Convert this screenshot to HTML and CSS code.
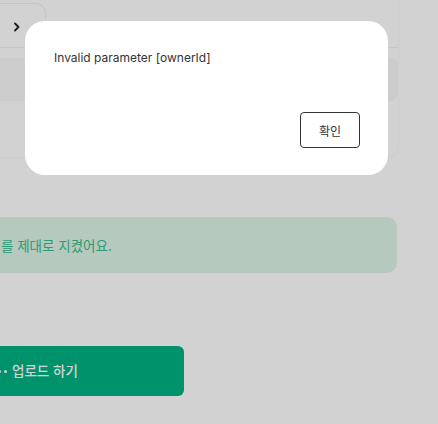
FILE: index.html
```html
<!DOCTYPE html>
<html lang="ko">
<head>
<meta charset="utf-8">
<link rel="stylesheet" href="styles.css">
</head>
<body>
<div class="page">
  <section class="panel">
    <div class="tabs">
      <div class="tab">
        <svg class="chev" width="8" height="10" viewBox="0 0 8 10"><path d="M2 1.5 L5.5 5 L2 8.5" fill="none" stroke="#222" stroke-width="1.8" stroke-linecap="round" stroke-linejoin="round"/></svg>
      </div>
    </div>
    <div class="bar"></div>
  </section>
  <div class="notice"><span class="notice-text">를 제대로 지켰어요.</span></div>
  <button class="upload"><span class="dot"></span><span class="dot"></span>업로드 하기</button>
</div>

<div class="overlay">
  <div class="modal">
    <p class="msg">Invalid parameter [ownerId]</p>
    <div class="actions"><button class="ok">확인</button></div>
  </div>
</div>
</body>
</html>
```

FILE: styles.css
```css
html, body {
  margin: 0;
  padding: 0;
  background: #ffffff;
  overflow: hidden;
  width: 438px;
  height: 424px;
  font-family: Inter, "Noto Sans CJK KR", sans-serif;
}
.page {
  margin-left: -200px;
  width: 599px;
  display: flex;
  flex-direction: column;
}
.panel {
  box-sizing: border-box;
  height: 168px;
  margin-top: -10px;
  border: 1px solid #f9f9f9;
  border-radius: 12px;
  display: flex;
  flex-direction: column;
}
.tabs {
  display: flex;
  justify-content: flex-start;
  padding-top: 12px;
  border-bottom: 1px solid #f2f2f2;
}
.tab {
  box-sizing: border-box;
  width: 245px;
  height: 44px;
  border: 1px solid #f0f0f0;
  border-left: none;
  border-bottom: none;
  border-radius: 0 10px 0 0;
  display: flex;
  align-items: center;
  padding-left: 212px;
}
.chev { display: block; margin-top: 2px; }
.bar {
  margin-top: 10px;
  width: 597px;
  height: 43px;
  background: #f8f8f8;
  border-radius: 0 8px 8px 0;
}
.notice {
  margin-top: 59px;
  width: 597px;
  height: 56px;
  box-sizing: border-box;
  background: #ddf4e8;
  border-radius: 10px;
  display: flex;
  align-items: center;
  padding-left: 201px;
  font-family: "Noto Sans CJK KR", sans-serif;
  font-size: 13.5px;
  color: #38bd8f;
}
.upload {
  margin-top: 73px;
  width: 384px;
  height: 50px;
  border: none;
  border-radius: 6px;
  background: #00b382;
  color: #ffffff;
  font-family: "Noto Sans CJK KR", sans-serif;
  font-weight: 500;
  font-size: 13.5px;
  display: flex;
  align-items: center;
  justify-content: flex-start;
  padding: 0 0 3px 198px;
}
.dot {
  flex: none;
  width: 3px;
  height: 3px;
  border-radius: 50%;
  background: #ffffff;
  margin-right: 3px;
  margin-top: 3px;
}
.dot + .dot { margin-right: 5px; }
.overlay {
  position: fixed;
  inset: 0;
  background: rgba(0, 0, 0, 0.176);
}
.modal {
  position: absolute;
  left: 25px;
  top: 21px;
  width: 363px;
  height: 154px;
  box-sizing: border-box;
  background: #ffffff;
  border-radius: 20px;
  padding: 30px 28px 27px 29px;
  display: flex;
  flex-direction: column;
  justify-content: space-between;
}
.msg {
  margin: 0;
  font-size: 12px;
  color: #333333;
  line-height: 14px;
}
.actions {
  display: flex;
  justify-content: flex-end;
}
.ok {
  width: 60px;
  height: 36px;
  box-sizing: border-box;
  border: 1px solid #333333;
  border-radius: 4px;
  background: #ffffff;
  color: #333333;
  font-family: "Noto Sans CJK KR", sans-serif;
  font-size: 12px;
  padding: 0;
}
```
